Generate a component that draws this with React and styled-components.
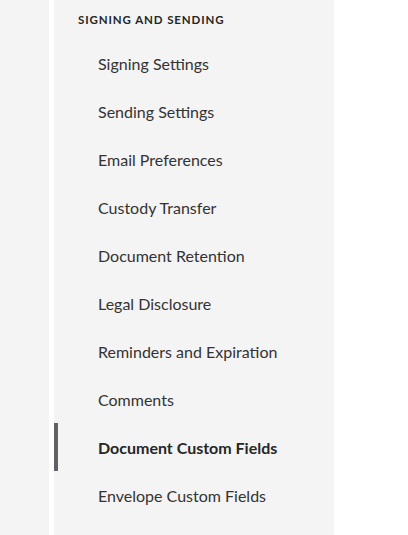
import React from 'react';
import styled, { createGlobalStyle } from 'styled-components';

const GlobalStyle = createGlobalStyle`
  html, body {
    margin: 0;
    padding: 0;
    background: #ffffff;
  }
  body {
    font-family: "Lato", "Noto Sans", sans-serif;
  }
`;

const items = [
  'Signing Settings',
  'Sending Settings',
  'Email Preferences',
  'Custody Transfer',
  'Document Retention',
  'Legal Disclosure',
  'Reminders and Expiration',
  'Comments',
  'Document Custom Fields',
  'Envelope Custom Fields',
];

function App() {
  const active = 'Document Custom Fields';
  return (
    <>
      <GlobalStyle />
      <Layout>
        <Rail />
        <Nav>
          <SectionTitle>Signing and Sending</SectionTitle>
          <List>
            {items.map((label) => (
              <Item key={label} active={label === active}>
                {label}
              </Item>
            ))}
          </List>
        </Nav>
      </Layout>
    </>
  );
}

const Layout = styled.div`
  display: flex;
  height: 535px;
  overflow: hidden;
`;

const Rail = styled.div`
  width: 49px;
  flex: none;
  background: #f4f4f4;
  margin-right: 5px;
`;

const Nav = styled.nav`
  width: 280px;
  flex: none;
  background: #f4f4f4;
`;

const SectionTitle = styled.h3`
  margin: 0;
  height: 39px;
  padding-left: 24px;
  display: flex;
  align-items: center;
  font-size: 11.5px;
  font-weight: 700;
  letter-spacing: 0.9px;
  text-transform: uppercase;
  color: #262626;
`;

const List = styled.ul`
  list-style: none;
  margin: 0;
  padding: 0;
`;

const Item = styled.li`
  height: 48px;
  display: flex;
  align-items: center;
  padding-left: 44px;
  font-size: 16px;
  font-weight: ${(p) => (p.active ? 700 : 400)};
  color: ${(p) => (p.active ? '#262626' : '#333333')};
  box-shadow: ${(p) => (p.active ? 'inset 4px 0 0 #616166' : 'none')};
`;

export default App;
